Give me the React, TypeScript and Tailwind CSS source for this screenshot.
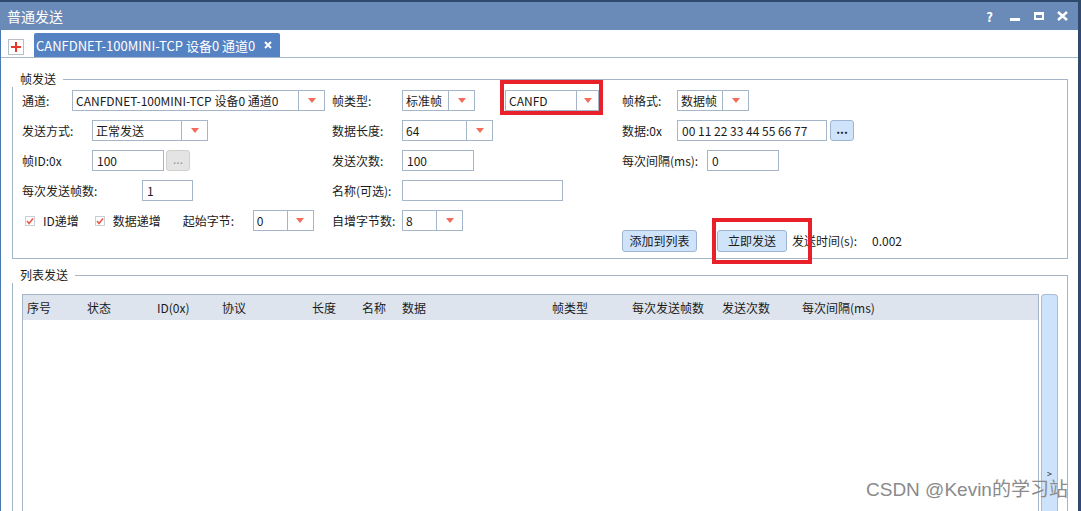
import React from "react";

function Arrow() {
  return (
    <svg width="8" height="5" viewBox="0 0 8 5">
      <path d="M0 0H8L4 5Z" fill="#f36b5b" />
    </svg>
  );
}

function Sel({ className, value }: { className: string; value: string }) {
  return (
    <div className={`flex h-[21px] shrink-0 border border-[#a6b6ca] bg-white ${className}`}>
      <div className="flex flex-1 items-center overflow-hidden whitespace-nowrap pl-[3px]">{value}</div>
      <div className="flex w-[26px] items-center justify-center border-l border-[#a6b6ca]">
        <Arrow />
      </div>
    </div>
  );
}

function Input({ className, value = "" }: { className: string; value?: string }) {
  return (
    <div className={`flex h-[21px] shrink-0 items-center border border-[#a6b6ca] bg-white pl-[4px] whitespace-nowrap ${className}`}>
      {value}
    </div>
  );
}

function Check({ label }: { label: string }) {
  return (
    <div className="flex items-center">
      <svg width="10" height="10" viewBox="0 0 10 10" className="mr-[8px]">
        <rect x="0.5" y="0.5" width="9" height="9" fill="#fff" stroke="#c9ced6" />
        <path d="M2 5L4 7.5L8 2.5" fill="none" stroke="#ee5a4c" strokeWidth="1.6" />
      </svg>
      <span>{label}</span>
    </div>
  );
}

function Cell({ className, children }: { className: string; children: React.ReactNode }) {
  return <div className={`flex h-[21px] shrink-0 items-center ${className}`}>{children}</div>;
}

export default function App() {
  return (
    <div className="relative flex h-[511px] w-[1081px] flex-col overflow-hidden border-r-[3px] border-[#2f4a6d] bg-white font-['Noto_Sans_CJK_SC','Liberation_Sans',sans-serif] text-[12px] leading-none text-[#1b1b1b]">
      {/* Title bar */}
      <div className="flex h-[30px] shrink-0 items-center border-t-2 border-[#2e4a6e] bg-[#6a8bb7] pl-[7px] pr-[10px] text-white">
        <span className="text-[14px]">普通发送</span>
        <div className="ml-auto flex items-center">
          <span className="mr-[17px] text-[13px] font-bold">?</span>
          <div className="mr-[14px] mt-[7px] h-[3px] w-[10px] bg-white" />
          <div className="mr-[13px] h-[8px] w-[10px] border-2 border-t-[3px] border-white" />
          <svg width="11" height="10" viewBox="0 0 11 10">
            <path d="M1 1L10 9M10 1L1 9" stroke="#fff" strokeWidth="2.4" />
          </svg>
        </div>
      </div>

      <div className="flex flex-1 flex-col border-l border-[#4a78b0]">
        {/* Tab bar */}
        <div className="flex h-[28px] shrink-0 items-end border-b border-[#a5b8cc] pl-[7px]">
          <div className="mb-[2px] flex h-[16px] w-[16px] items-center justify-center border border-[#b5bec9] bg-white">
            <svg width="10" height="10" viewBox="0 0 10 10">
              <path d="M5 0V10M0 5H10" stroke="#e8392c" strokeWidth="2" />
            </svg>
          </div>
          <div className="ml-[10px] flex h-[24px] w-[246px] items-center rounded-t-[2px] bg-[#5582c2] pl-[2px] text-white">
            <span className="whitespace-nowrap text-[13px]">CANFDNET-100MINI-TCP 设备0 通道0</span>
            <svg width="8" height="8" viewBox="0 0 8 8" className="ml-[9px]">
              <path d="M1 1L7 7M7 1L1 7" stroke="#fff" strokeWidth="2" />
            </svg>
          </div>
        </div>

        <div className="flex flex-1 flex-col pl-[11px] pr-[10px]">
          {/* 帧发送 group */}
          <div className="mt-[13px] flex h-[16px] items-center">
            <span className="pl-[8px] pr-[7px]">帧发送</span>
            <div className="h-[8px] flex-1 self-end border-r border-t border-[#a5b6c9]" />
          </div>
          <div className="flex flex-col border-b border-l border-r border-[#a5b6c9] pb-[6px] pl-[9px] pt-[3px]">
            {/* row 1 */}
            <div className="flex h-[30px] items-start">
              <Cell className="w-[310px]">
                <span className="w-[50px]">通道:</span>
                <Sel className="w-[253px]" value="CANFDNET-100MINI-TCP 设备0 通道0" />
              </Cell>
              <Cell className="w-[290px]">
                <span className="w-[70px]">帧类型:</span>
                <Sel className="w-[73px]" value="标准帧" />
                <Sel className="ml-[30px] w-[94px] [&>div:last-child]:w-[22px]" value="CANFD" />
              </Cell>
              <Cell className="">
                <span className="w-[55px]">帧格式:</span>
                <Sel className="w-[72px]" value="数据帧" />
              </Cell>
            </div>
            {/* row 2 */}
            <div className="flex h-[30px] items-start">
              <Cell className="w-[310px]">
                <span className="w-[70px]">发送方式:</span>
                <Sel className="w-[116px]" value="正常发送" />
              </Cell>
              <Cell className="w-[290px]">
                <span className="w-[70px]">数据长度:</span>
                <Sel className="w-[91px]" value="64" />
              </Cell>
              <Cell className="">
                <span className="w-[55px]">数据:0x</span>
                <Input className="w-[150px]" value="00 11 22 33 44 55 66 77" />
                <div className="ml-[3px] flex h-[21px] w-[24px] items-end justify-center rounded-[3px] border border-[#9fb6d3] bg-[#cfe3fb] pb-[5px] font-bold">
                  ...
                </div>
              </Cell>
            </div>
            {/* row 3 */}
            <div className="flex h-[30px] items-start">
              <Cell className="w-[310px]">
                <span className="w-[70px]">帧ID:0x</span>
                <Input className="w-[72px]" value="100" />
                <div className="ml-[2px] flex h-[21px] w-[24px] items-end justify-center rounded-[3px] border border-[#cfcfcf] bg-[#e4e4e4] pb-[5px] text-[#9a9a9a]">
                  ...
                </div>
              </Cell>
              <Cell className="w-[290px]">
                <span className="w-[70px]">发送次数:</span>
                <Input className="w-[72px]" value="100" />
              </Cell>
              <Cell className="">
                <span className="w-[85px]">每次间隔(ms):</span>
                <Input className="w-[72px]" value="0" />
              </Cell>
            </div>
            {/* row 4 */}
            <div className="flex h-[30px] items-start">
              <Cell className="w-[310px]">
                <span className="w-[120px]">每次发送帧数:</span>
                <Input className="w-[51px]" value="1" />
              </Cell>
              <Cell className="w-[290px]">
                <span className="w-[70px]">名称(可选):</span>
                <Input className="w-[161px]" />
              </Cell>
            </div>
            {/* row 5 */}
            <div className="flex h-[30px] items-start">
              <Cell className="w-[310px] pl-[3px]">
                <Check label="ID递增" />
                <div className="ml-[16px]">
                  <Check label="数据递增" />
                </div>
                <span className="ml-[22px] w-[70px]">起始字节:</span>
                <Sel className="w-[61px]" value="0" />
              </Cell>
              <Cell className="w-[290px]">
                <span className="w-[70px]">自增字节数:</span>
                <Sel className="w-[61px]" value="8" />
              </Cell>
            </div>
            {/* row 6 */}
            <div className="-mt-[10px] flex h-[22px] items-center pl-[600px]">
              <div className="flex h-[22px] w-[75px] items-center justify-center rounded-[3px] border border-[#9db4d2] bg-[#cfe3fb]">
                添加到列表
              </div>
              <div className="ml-[20px] flex h-[22px] w-[70px] items-center justify-center rounded-[3px] border border-[#9db4d2] bg-[#cfe3fb]">
                立即发送
              </div>
              <span className="ml-[5px] w-[80px]">发送时间(s):</span>
              <span>0.002</span>
            </div>
          </div>

          {/* 列表发送 group */}
          <div className="mt-[8px] flex h-[16px] items-center">
            <span className="pl-[8px] pr-[7px]">列表发送</span>
            <div className="h-[8px] flex-1 self-end border-r border-t border-[#a5b6c9]" />
          </div>
          <div className="flex flex-1 border-l border-r border-[#a5b6c9] pl-[9px] pr-[9px] pt-[11px]">
            <div className="flex flex-1 flex-col border-l border-r border-t border-[#a5b6c9]">
              <div className="flex h-[25px] items-center bg-[#dde4ee] pl-[4px] whitespace-nowrap">
                <span className="w-[60px]">序号</span>
                <span className="w-[70px]">状态</span>
                <span className="w-[65px]">ID(0x)</span>
                <span className="w-[90px]">协议</span>
                <span className="w-[50px]">长度</span>
                <span className="w-[40px]">名称</span>
                <span className="w-[150px]">数据</span>
                <span className="w-[80px]">帧类型</span>
                <span className="w-[90px]">每次发送帧数</span>
                <span className="w-[80px]">发送次数</span>
                <span>每次间隔(ms)</span>
              </div>
            </div>
            <div className="ml-[2px] flex w-[17px] flex-col items-center justify-start rounded-t-[4px] border border-b-0 border-[#a7bcd6] bg-[#cde3fb] pt-[174px] text-[9px]">
              &gt;
            </div>
          </div>
        </div>
      </div>

      {/* red annotation boxes */}
      <div className="absolute left-[500px] top-[80px] h-[35px] w-[103px] border-[4px] border-[#e8202a]" />
      <div className="absolute left-[712px] top-[218px] h-[46px] w-[100px] border-[4px] border-[#e8202a]" />

      {/* watermark */}
      <div className="absolute left-[866px] top-[480px] whitespace-nowrap font-['Liberation_Sans','Noto_Sans_CJK_SC',sans-serif] text-[19px] leading-none text-[#8a8a8a]">
        CSDN @Kevin的学习站
      </div>
    </div>
  );
}
